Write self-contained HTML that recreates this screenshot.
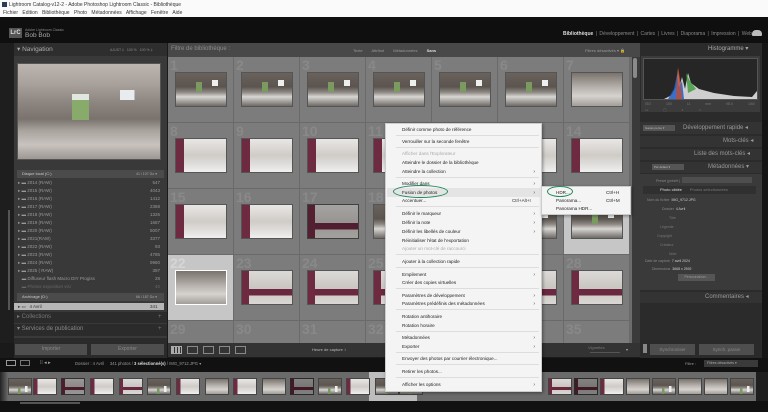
<!DOCTYPE html>
<html><head><meta charset="utf-8">
<style>
*{margin:0;padding:0;box-sizing:border-box}
body{width:768px;height:412px;overflow:hidden;background:#1a1a1a;font-family:"Liberation Sans",sans-serif;position:relative;color:#bbb}
.a{position:absolute}
.t{position:absolute;white-space:nowrap;font-size:5px;line-height:6px}
.cell{position:absolute;width:66px;height:66px;background:#7c7c7c;border-right:1px solid #6a6a6a;border-bottom:1px solid #6a6a6a;overflow:hidden}
.cell .n{position:absolute;left:2px;top:0;font-size:14px;font-weight:bold;color:#898989;line-height:16px}
.cell .p{position:absolute;left:7px;top:15px;width:52px;height:35px;border:1px solid #555}
.sel{background:#c6c6c6}
.d{background:linear-gradient(90deg,transparent 0 72%,#eef0f0 72% 84%,transparent 84%) 0 7px/100% 6px no-repeat,linear-gradient(90deg,transparent 0 40%,#7a9a60 40% 52%,transparent 52%) 0 9px/100% 10px no-repeat,linear-gradient(#6a625c 0%,#5c554f 42%,#8c8782 58%,#d8d6d3 72%,#6e6a66 100%)}
.b{background:linear-gradient(90deg,#6e2a40 0 16%,transparent 16%),linear-gradient(#e9e7e5,#cfcbc7 50%,#efefef 100%)}
.k{background:linear-gradient(90deg,#6e2a40 0 14%,transparent 14%),linear-gradient(transparent 0 55%,#6a2840 55% 75%,transparent 75%),linear-gradient(#dcdad8,#cac6c2 50%,#d9d6d3 100%)}
.g{background:linear-gradient(#7a736d 0%,#b8b3ae 45%,#d6d2ce 70%,#a29d98 100%)}
.ph{position:absolute;top:2px;width:24px;height:17px;border:1px solid #444}
.mi{position:absolute;left:16px;font-size:4.6px;color:#222;white-space:nowrap;line-height:6px}
.gr{color:#aaa}
.ar{position:absolute;right:6px;font-size:5px;color:#444;line-height:6px}
.sep{position:absolute;left:10px;right:2px;height:1px;background:#ddd}
.row{position:absolute;left:18px;width:146px;height:8px;border-bottom:1px solid #383838;font-size:4.5px;color:#999;line-height:8px}
.row span{position:absolute;right:4px}
</style></head><body>
<div class="a" style="left:0;top:0;width:768px;height:17px;background:#fafafa"></div>
<div class="a" style="left:2px;top:2px;width:5px;height:5px;background:#2b3c5a"></div>
<div class="t" style="left:9px;top:1.5px;color:#333">Lightroom Catalog-v12-2 - Adobe Photoshop Lightroom Classic - Bibliothèque</div>
<div class="t" style="left:3px;top:10px;color:#333;word-spacing:3px">Fichier Edition Bibliothèque Photo Métadonnées Affichage Fenêtre Aide</div>
<div class="a" style="left:0;top:17px;width:768px;height:26px;background:#0f0f0f"></div>
<div class="a" style="left:9px;top:28px;width:13px;height:10px;background:#555;color:#ddd;font-size:6px;line-height:10px;text-align:center;font-weight:bold">LrC</div>
<div class="t" style="left:25px;top:27px;font-size:3.5px;color:#888">Adobe Lightroom Classic</div>
<div class="t" style="left:25px;top:32px;font-size:6.5px;line-height:7px;color:#aaa">Bob Bob</div>
<div class="t" style="left:563px;top:31px;font-size:5px;color:#8a8a8a;word-spacing:1px"><b style="color:#ddd">Bibliothèque</b> | Développement | Cartes | Livres | Diaporama | Impression | Web |</div>
<div class="a" style="left:752px;top:30px;width:10px;height:6px;background:#bbb;border-radius:4px 4px 1px 1px"></div>
<div class="a" style="left:0;top:43px;width:14px;height:300px;background:#1e1e1e"></div>
<div class="a" style="left:8px;top:210px;width:2px;height:100px;background:#555"></div>
<div class="a" style="left:14px;top:43px;width:153px;height:300px;background:#393939"></div>
<div class="a" style="left:14px;top:43px;width:153px;height:13px;background:#2e2e2e"></div>
<div class="t" style="left:17px;top:46px;font-size:6.5px;line-height:7px;color:#aaa">▾ Navigation</div>
<div class="t" style="left:110px;top:47px;font-size:3.5px;color:#888">AJUST ‡ &nbsp; 100 % &nbsp; 100 % ‡</div>
<div class="a" style="left:17px;top:63px;width:144px;height:97px;border:1px solid #555;background:linear-gradient(90deg,transparent 0 38%,#e0e6e0 38% 50%,transparent 50%) 0 30px/100% 6px no-repeat,linear-gradient(90deg,transparent 0 38%,#88aa6a 38% 50%,transparent 50%) 0 36px/100% 20px no-repeat,linear-gradient(90deg,transparent 0 72%,#e8ecef 72% 82%,transparent 82%) 0 26px/100% 10px no-repeat,linear-gradient(#bcb6b0 0%,#aaa39d 20%,#8e8680 40%,#7a736d 58%,#a9a39e 70%,#c8c3be 85%,#9c9792 100%)"></div>
<div class="a" style="left:17px;top:170px;width:147px;height:8px;background:#4b4b4b"></div>
<div class="t" style="left:22px;top:171px;font-size:4px;color:#ccc">Disque local (C:)</div>
<div class="t" style="left:136px;top:171px;font-size:3.5px;color:#aaa">41 / 107 Go ▾</div>
<div class="row" style="top:179px">▸ ▬ 2014 (RAW)<span>547</span></div>
<div class="row" style="top:187px">▸ ▬ 2015 (RAW)<span>4043</span></div>
<div class="row" style="top:195px">▸ ▬ 2016 (RAW)<span>1412</span></div>
<div class="row" style="top:203px">▸ ▬ 2017 (RAW)<span>2368</span></div>
<div class="row" style="top:211px">▸ ▬ 2018 (RAW)<span>1326</span></div>
<div class="row" style="top:219px">▸ ▬ 2019 (RAW)<span>1687</span></div>
<div class="row" style="top:227px">▸ ▬ 2020 (RAW)<span>5007</span></div>
<div class="row" style="top:235px">▸ ▬ 2021(RAW)<span>3377</span></div>
<div class="row" style="top:243px">▸ ▬ 2022 (RAW)<span>93</span></div>
<div class="row" style="top:251px">▸ ▬ 2023 (RAW)<span>4785</span></div>
<div class="row" style="top:259px">▸ ▬ 2024 (RAW)<span>9960</span></div>
<div class="row" style="top:267px">▸ ▬ 2025 ( RAW)<span>397</span></div>
<div class="row" style="top:275px">&nbsp;&nbsp; ▬ Diffuseur flash Macro DIY Progiss<span>28</span></div>
<div class="row" style="top:283px;color:#666">&nbsp;&nbsp; ▬ Photos exposition visi<span>40</span></div>
<div class="a" style="left:17px;top:293px;width:147px;height:8px;background:#4b4b4b"></div>
<div class="t" style="left:22px;top:294px;font-size:4px;color:#ccc">Archivage (D:)</div>
<div class="t" style="left:136px;top:294px;font-size:3.5px;color:#aaa">66 / 187 Go ▾</div>
<div class="a" style="left:14px;top:303px;width:150px;height:7px;background:#b6b6b6"></div>
<div class="t" style="left:18px;top:303.5px;font-size:4.5px;color:#333">▸ ▭ &nbsp; 4 Avril</div>
<div class="t" style="left:150px;top:303.5px;font-size:4.5px;color:#333">341</div>
<div class="a" style="left:14px;top:312px;width:153px;height:11px;background:#2b2b2b"></div>
<div class="t" style="left:17px;top:314px;font-size:6px;line-height:7px;color:#777">▸ Collections</div>
<div class="t" style="left:158px;top:314px;font-size:6px;line-height:7px;color:#777">+</div>
<div class="a" style="left:14px;top:324px;width:153px;height:12px;background:#2b2b2b"></div>
<div class="t" style="left:17px;top:326px;font-size:6px;line-height:7px;color:#888">▾ Services de publication</div>
<div class="t" style="left:158px;top:326px;font-size:6px;line-height:7px;color:#777">+</div>
<div class="a" style="left:14px;top:338px;width:153px;height:20px;background:#2a2a2a"></div>
<div class="a" style="left:15px;top:344px;width:72px;height:11px;background:#4e4e4e;font-size:5px;color:#888;text-align:center;line-height:11px">Importer</div>
<div class="a" style="left:91px;top:344px;width:73px;height:11px;background:#4e4e4e;font-size:5px;color:#888;text-align:center;line-height:11px">Exporter</div>
<div class="a" style="left:168px;top:43px;width:472px;height:14px;background:#484848"></div>
<div class="t" style="left:171px;top:46px;font-size:6px;line-height:7px;color:#8a8a8a">Filtre de bibliothèque :</div>
<div class="t" style="left:353px;top:47.5px;font-size:4px;color:#999;word-spacing:8px">Texte Attribut Métadonnées <b style="color:#ddd">Sans</b></div>
<div class="t" style="left:585px;top:47.5px;font-size:4px;color:#999">Filtres désactivés ▾ 🔒</div>
<div class="a" style="left:168px;top:57px;width:464px;height:286px;background:#6c6c6c;overflow:hidden">
<div class="cell" style="left:0;top:0"><div class="n">1</div><div class="p d"></div></div>
<div class="cell" style="left:66px;top:0"><div class="n">2</div><div class="p d"></div></div>
<div class="cell" style="left:132px;top:0"><div class="n">3</div><div class="p d"></div></div>
<div class="cell" style="left:198px;top:0"><div class="n">4</div><div class="p d"></div></div>
<div class="cell" style="left:264px;top:0"><div class="n">5</div><div class="p d"></div></div>
<div class="cell" style="left:330px;top:0"><div class="n">6</div><div class="p d"></div></div>
<div class="cell" style="left:396px;top:0"><div class="n">7</div><div class="p g"></div></div>
<div class="cell" style="left:0;top:66px"><div class="n">8</div><div class="p b"></div></div>
<div class="cell" style="left:66px;top:66px"><div class="n">9</div><div class="p b"></div></div>
<div class="cell" style="left:132px;top:66px"><div class="n">10</div><div class="p b"></div></div>
<div class="cell" style="left:198px;top:66px"><div class="n">11</div><div class="p b"></div></div>
<div class="cell" style="left:264px;top:66px"><div class="n">12</div><div class="p b"></div></div>
<div class="cell" style="left:330px;top:66px"><div class="n">13</div><div class="p b"></div></div>
<div class="cell" style="left:396px;top:66px"><div class="n">14</div><div class="p b"></div></div>
<div class="cell" style="left:0;top:132px"><div class="n">15</div><div class="p b"></div></div>
<div class="cell" style="left:66px;top:132px"><div class="n">16</div><div class="p b"></div></div>
<div class="cell" style="left:132px;top:132px"><div class="n">17</div><div class="p k" style="filter:brightness(.75)"></div></div>
<div class="cell" style="left:198px;top:132px"><div class="n">18</div><div class="p d"></div></div>
<div class="cell" style="left:264px;top:132px"><div class="n">19</div><div class="p d"></div></div>
<div class="cell" style="left:330px;top:132px"><div class="n">20</div><div class="p d"></div></div>
<div class="cell sel" style="left:396px;top:132px"><div class="n" style="color:#d6d6d6">21</div><div class="p d"></div></div>
<div class="cell sel" style="left:0;top:198px"><div class="n" style="color:#d6d6d6">22</div><div class="p g" style="border-color:#fff"></div></div>
<div class="cell" style="left:66px;top:198px"><div class="n">23</div><div class="p k"></div></div>
<div class="cell" style="left:132px;top:198px"><div class="n">24</div><div class="p k"></div></div>
<div class="cell" style="left:198px;top:198px"><div class="n">25</div><div class="p k"></div></div>
<div class="cell" style="left:264px;top:198px"><div class="n">26</div><div class="p k"></div></div>
<div class="cell" style="left:330px;top:198px"><div class="n">27</div><div class="p k"></div></div>
<div class="cell" style="left:396px;top:198px"><div class="n">28</div><div class="p k"></div></div>
<div class="cell" style="left:0;top:264px"><div class="n">29</div></div>
<div class="cell" style="left:66px;top:264px"><div class="n">30</div></div>
<div class="cell" style="left:132px;top:264px"><div class="n">31</div></div>
<div class="cell" style="left:198px;top:264px"><div class="n">32</div></div>
<div class="cell" style="left:264px;top:264px"><div class="n">33</div></div>
<div class="cell" style="left:330px;top:264px"><div class="n">34</div></div>
<div class="cell" style="left:396px;top:264px"><div class="n">35</div></div>
</div>
<div class="a" style="left:632px;top:57px;width:8px;height:286px;background:#3a3a3a"></div>
<div class="a" style="left:633px;top:58px;width:4px;height:20px;background:#8a8a8a;border-radius:2px"></div>
<div class="a" style="left:168px;top:343px;width:472px;height:14px;background:#333"></div>
<div class="a" style="left:171px;top:346px;width:11px;height:8px;border:1px solid #aaa;background:repeating-linear-gradient(90deg,#aaa 0 2px,#333 2px 3px)"></div>
<div class="a" style="left:187px;top:346px;width:11px;height:8px;border:1px solid #888"></div>
<div class="a" style="left:203px;top:346px;width:11px;height:8px;border:1px solid #888"></div>
<div class="a" style="left:219px;top:346px;width:11px;height:8px;border:1px solid #888"></div>
<div class="a" style="left:235px;top:346px;width:11px;height:8px;border:1px solid #888"></div>
<div class="t" style="left:312px;top:347px;font-size:4px;color:#bbb">Heure de capture ↕</div>
<div class="t" style="left:588px;top:345px;font-size:4px;color:#777">Vignettes</div>
<div class="a" style="left:590px;top:352px;width:30px;height:1px;background:#555"></div>
<div class="t" style="left:626px;top:347px;font-size:4px;color:#aaa">▾</div>
<div class="a" style="left:640px;top:43px;width:122px;height:315px;background:#2b2b2b"></div>
<div class="a" style="left:762px;top:43px;width:6px;height:315px;background:#151515"></div>
<div class="t" style="left:708px;top:46px;font-size:6px;line-height:7px;color:#aaa">Histogramme ▾</div>
<div class="a" style="left:641px;top:56px;width:119px;height:56px;background:#3b3b3b"></div>
<div class="a" style="left:643px;top:58px;width:115px;height:42px;background:#262626;border:1px solid #555;overflow:hidden">
<svg width="115" height="42" viewBox="0 0 115 42"><path d="M0 42 L20 40 L28 36 L32 28 L34 10 L36 26 L38 18 L41 30 L44 14 L47 24 L55 30 L70 34 L90 37 L108 38 L113 32 L115 42Z" fill="#cfcfcf"/><path d="M24 40 L30 30 L33 16 L35 28 L38 22 L40 40Z" fill="#2c64c8" opacity=".9"/><path d="M34 8 L36 20 L38 40 L32 40Z" fill="#c84a2a" opacity=".8"/><path d="M42 14 L46 22 L52 30 L44 34Z" fill="#3a9a3a" opacity=".8"/></svg></div>
<div class="t" style="left:645px;top:101px;font-size:3.5px;color:#777;word-spacing:14px">ISO 100 11 mm f/8.0 1/60</div>
<div class="t" style="left:645px;top:107px;font-size:3.5px;color:#777;word-spacing:14px">▭ ▢ ◐ ◑</div>
<div class="a" style="left:640px;top:122px;width:122px;height:12px;background:#333"></div>
<div class="a" style="left:643px;top:125px;width:32px;height:6px;background:#555;font-size:3px;color:#bbb;line-height:6px;padding-left:2px">Gauss perso ▾</div>
<div class="t" style="left:683px;top:125px;font-size:6px;line-height:7px;color:#999">Développement rapide ◂</div>
<div class="a" style="left:640px;top:136px;width:122px;height:11px;background:#333"></div>
<div class="t" style="left:723px;top:138px;font-size:6px;line-height:7px;color:#999">Mots-clés ◂</div>
<div class="a" style="left:640px;top:149px;width:122px;height:11px;background:#333"></div>
<div class="t" style="left:694px;top:151px;font-size:6px;line-height:7px;color:#999">Liste des mots-clés ◂</div>
<div class="a" style="left:640px;top:162px;width:122px;height:11px;background:#333"></div>
<div class="a" style="left:652px;top:164px;width:32px;height:6px;background:#555;font-size:3px;color:#bbb;line-height:6px;padding-left:2px">Par défaut ▾</div>
<div class="t" style="left:708px;top:164px;font-size:6px;line-height:7px;color:#999">Métadonnées ▾</div>
<div class="a" style="left:640px;top:174px;width:122px;height:116px;background:#3a3a3a"></div>
<div class="t" style="left:656px;top:178px;font-size:3.5px;color:#888">Preset (prédéf.)</div>
<div class="a" style="left:682px;top:177px;width:70px;height:6px;background:#4e4e4e"></div>
<div class="a" style="left:643px;top:186px;width:113px;height:8px;background:#303030"></div>
<div class="t" style="left:660px;top:187px;font-size:4px;color:#ddd">Photo ciblée &nbsp; &nbsp; &nbsp; <span style="color:#777">Photos sélectionnées</span></div>
<div class="t" style="left:647px;top:197px;font-size:3.5px;color:#888">Nom du fichier &nbsp;<span style="color:#ccc">IMG_9712.JPG</span></div>
<div class="t" style="left:662px;top:206px;font-size:3.5px;color:#888">Dossier &nbsp;<span style="color:#ccc">4 Avril</span></div>
<div class="t" style="left:669px;top:215px;font-size:3.5px;color:#777">Titre</div>
<div class="t" style="left:660px;top:224px;font-size:3.5px;color:#777">Légende</div>
<div class="t" style="left:657px;top:233px;font-size:3.5px;color:#777">Copyright</div>
<div class="t" style="left:660px;top:242px;font-size:3.5px;color:#777">Créateur</div>
<div class="t" style="left:669px;top:251px;font-size:3.5px;color:#777">Note</div>
<div class="t" style="left:645px;top:258px;font-size:3.5px;color:#888">Date de capture &nbsp;<span style="color:#ccc">7 avril 2024</span></div>
<div class="t" style="left:652px;top:266px;font-size:3.5px;color:#888">Dimensions &nbsp;<span style="color:#ccc">3668 x 2592</span></div>
<div class="a" style="left:678px;top:274px;width:37px;height:7px;background:#555;font-size:3.5px;color:#999;text-align:center;line-height:7px">Personnaliser...</div>
<div class="a" style="left:640px;top:292px;width:122px;height:11px;background:#333"></div>
<div class="t" style="left:705px;top:294px;font-size:6px;line-height:7px;color:#999">Commentaires ◂</div>
<div class="a" style="left:640px;top:340px;width:122px;height:18px;background:#2a2a2a"></div>
<div class="a" style="left:643px;top:344px;width:4px;height:9px;background:#888"></div>
<div class="a" style="left:650px;top:344px;width:45px;height:11px;background:#4e4e4e;font-size:4.5px;color:#888;text-align:center;line-height:11px">Synchroniser</div>
<div class="a" style="left:699px;top:344px;width:55px;height:11px;background:#4e4e4e;font-size:4.5px;color:#888;text-align:center;line-height:11px">Synch. param</div>
<div class="a" style="left:0;top:358px;width:768px;height:14px;background:#111"></div>
<div class="a" style="left:6px;top:360px;width:10px;height:6px;border:1px solid #999"></div>
<div class="a" style="left:20px;top:360px;width:10px;height:6px;border:1px solid #777"></div>
<div class="t" style="left:40px;top:360px;font-size:5px;color:#aaa">⁞⁞ ◂ ▸</div>
<div class="t" style="left:75px;top:361px;font-size:4.2px;color:#999">Dossier : 4 Avril &nbsp; &nbsp; 341 photos / <b style="color:#ddd">3 sélectionné(s)</b> / IMG_9712.JPG ▾</div>
<div class="t" style="left:685px;top:361px;font-size:4px;color:#999">Filtre :</div>
<div class="a" style="left:704px;top:360px;width:54px;height:7px;background:#3a3a3a;font-size:3.5px;color:#aaa;line-height:7px;padding-left:3px">Filtres désactivés ▾</div>
<div class="a" style="left:0;top:372px;width:768px;height:29px;background:#6a6a6a"></div>
<div class="a" style="left:369px;top:372px;width:48px;height:29px;background:#bdbdbd"></div>
<div class="a" style="left:0;top:372px;width:8px;height:29px;background:linear-gradient(90deg,#222,#6a6a6a)"></div>
<div class="ph d" style="left:8px;top:378px"></div>
<div class="ph b" style="left:33px;top:378px"></div>
<div class="ph k" style="left:61px;top:378px;filter:brightness(.7)"></div>
<div class="ph b" style="left:90px;top:378px"></div>
<div class="ph k" style="left:119px;top:378px"></div>
<div class="ph d" style="left:147px;top:378px"></div>
<div class="ph b" style="left:176px;top:378px"></div>
<div class="ph g" style="left:205px;top:378px"></div>
<div class="ph b" style="left:233px;top:378px"></div>
<div class="ph g" style="left:262px;top:378px"></div>
<div class="ph k" style="left:290px;top:378px;filter:brightness(.6)"></div>
<div class="ph d" style="left:318px;top:378px"></div>
<div class="ph b" style="left:346px;top:378px"></div>
<div class="ph d" style="left:375px;top:378px"></div>
<div class="ph d" style="left:399px;top:378px"></div>
<div class="ph k" style="left:548px;top:378px"></div>
<div class="ph k" style="left:574px;top:378px;filter:brightness(.6)"></div>
<div class="ph b" style="left:600px;top:378px"></div>
<div class="ph g" style="left:626px;top:378px"></div>
<div class="ph d" style="left:652px;top:378px"></div>
<div class="ph g" style="left:678px;top:378px"></div>
<div class="ph g" style="left:704px;top:378px"></div>
<div class="ph d" style="left:730px;top:378px"></div>
<div class="a" style="left:756px;top:372px;width:12px;height:29px;background:#1e1e1e"></div>
<div class="a" style="left:0;top:401px;width:768px;height:11px;background:#111"></div>
<div class="a" style="left:20px;top:402px;width:60px;height:2px;background:#555"></div>
<div class="a" style="left:385px;top:123px;width:157px;height:269px;background:#f4f4f4;border:1px solid #ccc;box-shadow:1px 1px 3px rgba(0,0,0,.4)">
<div class="mi" style="top:2.5px">Définir comme photo de référence</div>
<div class="sep" style="top:11px"></div>
<div class="mi" style="top:15px">Verrouiller sur la seconde fenêtre</div>
<div class="sep" style="top:23px"></div>
<div class="mi gr" style="top:27px">Afficher dans l'Explorateur</div>
<div class="mi" style="top:36px">Atteindre le dossier de la bibliothèque</div>
<div class="mi" style="top:45px">Atteindre la collection</div><div class="ar" style="top:45px">›</div>
<div class="sep" style="top:53px"></div>
<div class="mi" style="top:57px">Modifier dans</div><div class="ar" style="top:57px">›</div>
<div class="a" style="left:1px;top:64px;width:153px;height:9px;background:#e4e4e4"></div>
<div class="mi" style="top:66px">Fusion de photos</div><div class="ar" style="top:66px">›</div>
<div class="a" style="left:7px;top:61px;width:55px;height:13px;border:1.5px solid #1e8a5a;border-radius:50%"></div>
<div class="mi" style="top:74px">Accentuer...</div><div class="t" style="left:126px;top:74px;font-size:4.5px;color:#333">Ctrl+Alt+I</div>
<div class="sep" style="top:82px"></div>
<div class="mi" style="top:87px">Définir le marqueur</div><div class="ar" style="top:87px">›</div>
<div class="mi" style="top:96px">Définir la note</div><div class="ar" style="top:96px">›</div>
<div class="mi" style="top:105px">Définir les libellés de couleur</div><div class="ar" style="top:105px">›</div>
<div class="mi" style="top:114px">Réinitialiser l'état de l'exportation</div>
<div class="mi gr" style="top:122px">Ajouter un mot-clé de raccourci</div>
<div class="sep" style="top:130px"></div>
<div class="mi" style="top:135px">Ajouter à la collection rapide</div>
<div class="sep" style="top:143px"></div>
<div class="mi" style="top:148px">Empilement</div><div class="ar" style="top:148px">›</div>
<div class="mi" style="top:156px">Créer des copies virtuelles</div>
<div class="sep" style="top:164px"></div>
<div class="mi" style="top:169px">Paramètres de développement</div><div class="ar" style="top:169px">›</div>
<div class="mi" style="top:177px">Paramètres prédéfinis des métadonnées</div><div class="ar" style="top:177px">›</div>
<div class="sep" style="top:185px"></div>
<div class="mi" style="top:190px">Rotation antihoraire</div>
<div class="mi" style="top:199px">Rotation horaire</div>
<div class="sep" style="top:207px"></div>
<div class="mi" style="top:211px">Métadonnées</div><div class="ar" style="top:211px">›</div>
<div class="mi" style="top:220px">Exporter</div><div class="ar" style="top:220px">›</div>
<div class="sep" style="top:228px"></div>
<div class="mi" style="top:232px">Envoyer des photos par courrier électronique...</div>
<div class="sep" style="top:240px"></div>
<div class="mi" style="top:245px">Retirer les photos...</div>
<div class="sep" style="top:253px"></div>
<div class="mi" style="top:258px">Afficher les options</div><div class="ar" style="top:258px">›</div>
</div>
<div class="a" style="left:541px;top:186px;width:90px;height:29px;background:#f4f4f4;border:1px solid #ccc;box-shadow:1px 1px 3px rgba(0,0,0,.4)">
<div class="t" style="left:14px;top:3px;font-size:4.6px;color:#222">HDR...</div><div class="t" style="left:64px;top:3px;font-size:4.6px;color:#222">Ctrl+H</div>
<div class="t" style="left:14px;top:11px;font-size:4.6px;color:#222">Panorama...</div><div class="t" style="left:64px;top:11px;font-size:4.6px;color:#222">Ctrl+M</div>
<div class="t" style="left:14px;top:19px;font-size:4.6px;color:#222">Panorama HDR...</div>
<div class="a" style="left:5px;top:-1px;width:26px;height:11px;border:1.5px solid #1e8a5a;border-radius:50%"></div>
</div>
</body></html>
